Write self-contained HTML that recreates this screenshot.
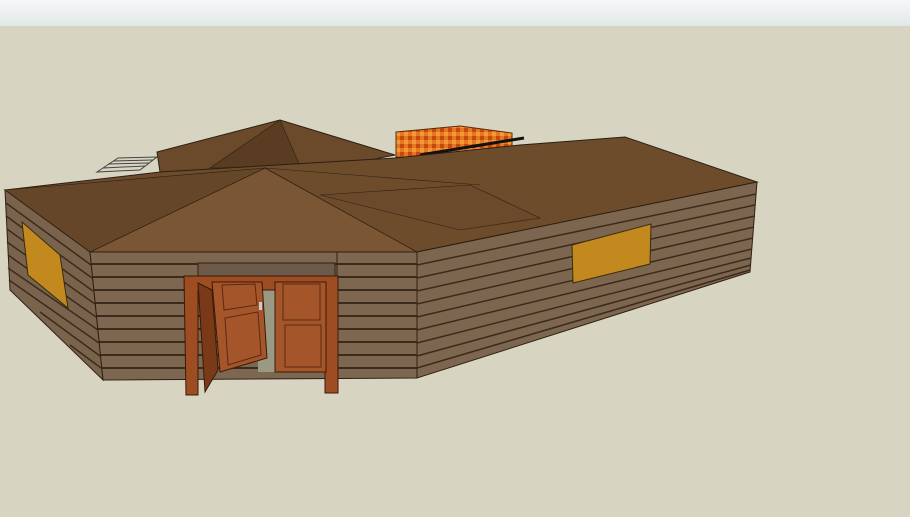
<!DOCTYPE html><html><head><style>body{margin:0;width:910px;height:512px;overflow:hidden;background:#d7d5c1}</style></head><body>
<svg width="910" height="512" viewBox="0 0 910 512" xmlns="http://www.w3.org/2000/svg">
<defs>
<linearGradient id="sky" x1="0" y1="0" x2="0" y2="1"><stop offset="0" stop-color="#f6f8f8"/><stop offset="1" stop-color="#e2e8e8"/></linearGradient>
<pattern id="chk" width="8" height="8" patternUnits="userSpaceOnUse"><rect width="8" height="8" fill="#e8761e"/><rect width="4" height="4" fill="#c04a10"/><rect x="4" y="4" width="4" height="4" fill="#f09a3a"/></pattern>
<pattern id="fs" width="10" height="13" patternUnits="userSpaceOnUse" y="252"><rect width="10" height="13" fill="#7e6750"/><rect y="11" width="10" height="2" fill="#3b2b1c"/></pattern>
</defs>
<rect width="910" height="26" fill="url(#sky)"/>
<!-- grate -->
<g stroke="#444" stroke-width="1" fill="none"><polygon points="97,172 118,158 157,157 140,170"/><line x1="103" y1="168" x2="145" y2="166"/><line x1="108" y1="164" x2="149" y2="163"/><line x1="113" y1="161" x2="153" y2="160"/></g>
<!-- back pyramid roof -->
<polygon points="157,152 280,120 395,155 330,168 160,172" fill="#6a4a2b" stroke="#2e1f12"/>
<polygon points="210,168 280,120 300,166" fill="#5a3c22" stroke="#2e1f12" stroke-width=".6"/>
<!-- orange box -->
<polygon points="396,132 460,126 512,133 512,150 420,157 396,157" fill="url(#chk)" stroke="#5a2a0a"/>
<line x1="420" y1="155" x2="524" y2="138" stroke="#111" stroke-width="3"/>
<!-- main roof -->
<polygon points="5,190 160,172 395,158 520,145 625,137 757,182 417,252 90,252" fill="#6d4c2c" stroke="#2e1f12"/>
<polygon points="90,252 265,168 417,252" fill="#7a5634" stroke="#2e1f12" stroke-width=".8"/>
<polygon points="5,190 265,168 90,252" fill="#664628" stroke="#2e1f12" stroke-width=".6"/>
<polygon points="320,195 470,185 540,218 460,230" fill="#6a4a2a" stroke="#2e1f12" stroke-width=".6"/>
<line x1="265" y1="168" x2="480" y2="185" stroke="#2e1f12" stroke-width=".6"/>
<!-- left wall -->
<polygon points="5,190 90,252 103,380 10,290" fill="#7a634c" stroke="#2e1f12"/>
<g stroke="#3b2b1c" stroke-width="1.5">
<line x1="6" y1="203" x2="91" y2="265"/><line x1="6" y1="216" x2="92" y2="278"/><line x1="7" y1="229" x2="93" y2="291"/><line x1="7" y1="242" x2="95" y2="304"/><line x1="8" y1="255" x2="96" y2="317"/><line x1="8" y1="268" x2="98" y2="330"/><line x1="9" y1="280" x2="99" y2="343"/><line x1="100" y1="356" x2="40" y2="312"/><line x1="101" y1="368" x2="70" y2="345"/>
</g>
<polygon points="22,222 60,255 68,308 28,275" fill="#c28a1e" stroke="#3a2a10"/>
<!-- front wall -->
<polygon points="90,252 417,252 417,378 103,380" fill="url(#fs)" stroke="#2e1f12"/>
<line x1="337" y1="252" x2="337" y2="378" stroke="#2e1f12"/>
<!-- right wall -->
<polygon points="417,252 757,182 750,272 417,378" fill="#7d6650" stroke="#2e1f12"/>
<g stroke="#3b2b1c" stroke-width="1.5">
<line x1="417" y1="265" x2="756" y2="194"/><line x1="417" y1="278" x2="755" y2="205"/><line x1="417" y1="291" x2="755" y2="216"/><line x1="417" y1="304" x2="754" y2="227"/><line x1="417" y1="317" x2="753" y2="238"/><line x1="417" y1="330" x2="752" y2="249"/><line x1="417" y1="343" x2="751" y2="258"/><line x1="417" y1="356" x2="751" y2="265"/><line x1="417" y1="368" x2="750" y2="270"/>
</g>
<polygon points="572,245 651,224 650,264 573,283" fill="#c28a1e" stroke="#3a2a10"/>
<!-- door -->
<rect x="198" y="263" width="137" height="13" fill="#6e5a48" stroke="#2e1f12"/>
<rect x="258" y="282" width="20" height="90" fill="#9a9a84"/>
<polygon points="184,276 338,276 338,393 325,393 325,290 198,290 198,395 186,395" fill="#9e4c22" stroke="#3a1a08"/>
<polygon points="198,283 212,290 218,370 205,392" fill="#7a3a18" stroke="#3a1a08"/>
<polygon points="212,282 262,282 267,358 220,372" fill="#a5552a" stroke="#3a1a08"/>
<rect x="275" y="282" width="51" height="90" fill="#a5552a" stroke="#3a1a08"/>
<g fill="none" stroke="#5a2a10"><polygon points="222,285 255,284 257,305 224,310"/><polygon points="225,318 258,312 261,355 228,365"/><rect x="283" y="284" width="37" height="36"/><rect x="285" y="325" width="36" height="42"/></g>
<rect x="259" y="302" width="3" height="8" fill="#ccc"/>
</svg>
</body></html>
